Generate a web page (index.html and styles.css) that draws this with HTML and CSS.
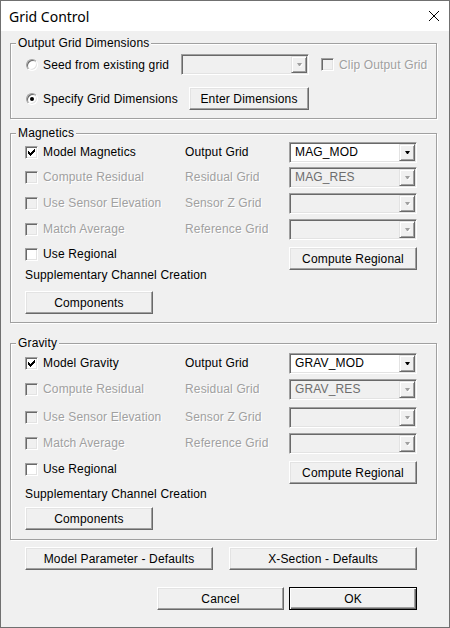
FILE: index.html
```html
<!DOCTYPE html>
<html lang="en">
<head>
  <meta charset="UTF-8">
  <meta name="viewport" content="width=device-width, initial-scale=1.0">
  <title>Grid Control</title>
  <link rel="stylesheet" href="styles.css">
</head>
<body>
  <div class="dialog">
    <div class="titlebar">
      <span class="title">Grid Control</span>
      <svg class="close" width="10" height="10" viewBox="0 0 10 10"><path d="M0 0L10 10M10 0L0 10" stroke="#000" stroke-width="1"/></svg>
    </div>

    <div class="client">
      <!-- Output grid dimensions -->
      <fieldset class="group output-group">
        <legend>Output Grid Dimensions</legend>
        <div class="opt-row">
          <span class="radio-item seed"><span class="radio"></span>Seed from existing grid</span>
          <span class="combo disabled seed-combo"><span class="combo-text"></span><span class="combo-btn"></span></span>
          <span class="check-item disabled clip"><span class="check"></span>Clip Output Grid</span>
        </div>
        <div class="opt-row second">
          <span class="radio-item specify"><span class="radio on"></span>Specify Grid Dimensions</span>
          <span class="btn enter-btn">Enter Dimensions</span>
        </div>
      </fieldset>

      <!-- Magnetics -->
      <fieldset class="group model-group mag">
        <legend>Magnetics</legend>
        <div class="model-grid">
          <span class="check-item"><span class="check on"><svg width="9" height="9" viewBox="0 0 9 9"><path d="M1 3h1v3H1zM2 4h1v3H2zM3 5h1v3H3zM4 4h1v3H4zM5 3h1v3H5zM6 2h1v3H6zM7 1h1v3H7z" fill="#000" shape-rendering="crispEdges"/></svg></span>Model Magnetics</span>
          <span class="field-label">Output Grid</span>
          <span class="combo"><span class="combo-text">MAG_MOD</span><span class="combo-btn"></span></span>

          <span class="check-item disabled"><span class="check"></span>Compute Residual</span>
          <span class="field-label disabled">Residual Grid</span>
          <span class="combo disabled"><span class="combo-text">MAG_RES</span><span class="combo-btn"></span></span>

          <span class="check-item disabled"><span class="check"></span>Use Sensor Elevation</span>
          <span class="field-label disabled">Sensor Z Grid</span>
          <span class="combo disabled"><span class="combo-text"></span><span class="combo-btn"></span></span>

          <span class="check-item disabled"><span class="check"></span>Match Average</span>
          <span class="field-label disabled">Reference Grid</span>
          <span class="combo disabled"><span class="combo-text"></span><span class="combo-btn"></span></span>

          <div class="tail">
            <span class="check-item regional"><span class="check"></span>Use Regional</span>
            <span class="supp">Supplementary Channel Creation</span>
            <span class="btn components">Components</span>
          </div>
          <span class="btn regional-btn">Compute Regional</span>
        </div>
      </fieldset>

      <!-- Gravity -->
      <fieldset class="group model-group grav">
        <legend>Gravity</legend>
        <div class="model-grid">
          <span class="check-item"><span class="check on"><svg width="9" height="9" viewBox="0 0 9 9"><path d="M1 3h1v3H1zM2 4h1v3H2zM3 5h1v3H3zM4 4h1v3H4zM5 3h1v3H5zM6 2h1v3H6zM7 1h1v3H7z" fill="#000" shape-rendering="crispEdges"/></svg></span>Model Gravity</span>
          <span class="field-label">Output Grid</span>
          <span class="combo"><span class="combo-text">GRAV_MOD</span><span class="combo-btn"></span></span>

          <span class="check-item disabled"><span class="check"></span>Compute Residual</span>
          <span class="field-label disabled">Residual Grid</span>
          <span class="combo disabled"><span class="combo-text">GRAV_RES</span><span class="combo-btn"></span></span>

          <span class="check-item disabled"><span class="check"></span>Use Sensor Elevation</span>
          <span class="field-label disabled">Sensor Z Grid</span>
          <span class="combo disabled"><span class="combo-text"></span><span class="combo-btn"></span></span>

          <span class="check-item disabled"><span class="check"></span>Match Average</span>
          <span class="field-label disabled">Reference Grid</span>
          <span class="combo disabled"><span class="combo-text"></span><span class="combo-btn"></span></span>

          <div class="tail">
            <span class="check-item regional"><span class="check"></span>Use Regional</span>
            <span class="supp">Supplementary Channel Creation</span>
            <span class="btn components">Components</span>
          </div>
          <span class="btn regional-btn">Compute Regional</span>
        </div>
      </fieldset>

      <div class="defaults-row">
        <span class="btn wide-btn">Model Parameter - Defaults</span>
        <span class="btn wide-btn">X-Section - Defaults</span>
      </div>

      <div class="action-row">
        <span class="btn cancel-btn">Cancel</span>
        <span class="btn ok-btn default">OK</span>
      </div>
    </div>
  </div>
</body>
</html>
```

FILE: styles.css
```css
* {
  box-sizing: border-box;
}
html, body {
  margin: 0;
}
body {
  width: 450px;
  height: 628px;
  overflow: hidden;
  font-family: "Liberation Sans", Arial, sans-serif;
  font-size: 12px;
  color: #000;
  background: #f0f0f0;
}

.dialog {
  width: 450px;
  height: 628px;
  border: 1px solid #707070;
  background: #f0f0f0;
}

/* title bar */
.titlebar {
  display: flex;
  align-items: center;
  justify-content: space-between;
  height: 30px;
  padding: 0 10px 0 8px;
  background: #fff;
}
.title {
  font-family: "Noto Sans", sans-serif;
  font-size: 14px;
}
.close {
  display: block;
}

.client {
  padding: 0 12px 0 9px;
  letter-spacing: 0.15px;
}

/* group boxes */
.group {
  margin: 0;
  padding: 0 0 8px 14px;
  min-width: 0;
  border: 1px solid #a0a0a0;
  box-shadow: inset 1px 1px #fff, 1px 1px #fff;
}
.group legend {
  margin-left: -9px;
  padding: 0 2px;
  line-height: 15px;
  background: #f0f0f0;
}
.output-group {
  margin-top: 5px;
  padding-top: 3px;
}
.mag {
  margin-top: 7px;
  padding-top: 1px;
}
.grav {
  margin-top: 13px;
  padding-top: 2px;
  padding-bottom: 9px;
}

/* output grid rows */
.opt-row {
  display: flex;
  align-items: center;
  height: 21px;
  white-space: nowrap;
}
.opt-row.second {
  height: 23px;
  margin-top: 12px;
}
.radio-item,
.check-item {
  display: flex;
  align-items: center;
  white-space: nowrap;
}
.seed {
  width: 156px;
}
.specify {
  width: 164px;
}
.clip {
  margin-left: 12px;
}
.enter-btn {
  width: 120px;
}

/* radio buttons */
.radio {
  position: relative;
  width: 12px;
  height: 12px;
  margin: 0 5px 0 1px;
  border: 1px solid;
  border-color: #a0a0a0 #fff #fff #a0a0a0;
  border-radius: 50%;
  background: #fff;
  box-shadow: inset 1px 1px #696969, inset -1px -1px #e3e3e3;
}
.radio.on::after {
  content: "";
  position: absolute;
  left: 3px;
  top: 3px;
  width: 4px;
  height: 4px;
  border-radius: 50%;
  background: #000;
}

/* check boxes */
.check {
  display: flex;
  align-items: center;
  justify-content: center;
  width: 13px;
  height: 13px;
  margin-right: 5px;
  padding: 1px;
  border: 1px solid;
  border-color: #a0a0a0 #fff #fff #a0a0a0;
  background: #fff;
  box-shadow: inset 1px 1px #696969, inset -1px -1px #e3e3e3;
  flex: none;
}
.check svg {
  display: block;
}
.disabled .check {
  background: #f0f0f0;
}

.disabled,
.disabled.check-item {
  color: #a0a0a0;
  text-shadow: 1px 1px 0 #fff;
}

/* combo boxes */
.combo {
  display: flex;
  width: 128px;
  height: 21px;
  padding: 1px;
  border: 1px solid;
  border-color: #a0a0a0 #fff #fff #a0a0a0;
  background: #fff;
  box-shadow: inset 1px 1px #696969, inset -1px -1px #e3e3e3;
}
.combo-text {
  flex: 1;
  padding-left: 4px;
  line-height: 17px;
  white-space: nowrap;
}
.combo-btn {
  position: relative;
  width: 16px;
  height: 17px;
  border: 1px solid;
  border-color: #e3e3e3 #696969 #696969 #e3e3e3;
  background: #f0f0f0;
  box-shadow: inset 1px 1px #fff, inset -1px -1px #a0a0a0;
}
.combo-btn::after {
  content: "";
  position: absolute;
  left: 5px;
  top: 6px;
  width: 1px;
  height: 0;
  border-left: 2px solid transparent;
  border-right: 2px solid transparent;
  border-top: 3px solid #000;
}
.combo.disabled {
  background: #f0f0f0;
  color: #6d6d6d;
  text-shadow: none;
}
.combo.disabled .combo-btn::after {
  border-top-color: #a0a0a0;
  filter: drop-shadow(1px 1px 0 #fff);
}

/* magnetics / gravity layout */
.model-grid {
  display: grid;
  grid-template-columns: 160px 104px 128px;
  grid-template-rows: 25px 26px 26px 28px auto;
  align-items: start;
}
.grav .model-grid {
  grid-template-rows: 26px 28px 26px 28px auto;
}
.model-grid > .check-item,
.field-label {
  height: 20px;
  line-height: 20px;
  white-space: nowrap;
}
.tail {
  grid-column: 1 / 3;
  display: flex;
  flex-direction: column;
  align-items: flex-start;
}
.tail .regional {
  height: 14px;
  line-height: 14px;
}
.supp {
  margin-top: 7px;
  line-height: 14px;
  white-space: nowrap;
}
.components {
  width: 128px;
  margin-top: 9px;
}
.regional-btn {
  width: 128px;
  height: 24px;
}
.grav .regional {
  margin-top: 1px;
}
.grav .supp {
  margin-top: 11px;
}
.grav .components {
  margin-top: 6px;
}
.grav .regional-btn {
  height: 23px;
}

/* push buttons */
.btn {
  display: flex;
  align-items: center;
  justify-content: center;
  height: 23px;
  border: 1px solid;
  border-color: #fff #696969 #696969 #fff;
  background: #f0f0f0;
  box-shadow: inset -1px -1px #a0a0a0, inset 1px 1px #e3e3e3;
  white-space: nowrap;
}
.btn.default {
  border-color: #000;
  box-shadow: inset 1px 1px #fff, inset -1px -1px #696969, inset -2px -2px #a0a0a0;
}

.defaults-row {
  display: flex;
  gap: 16px;
  margin-top: 7px;
  padding-left: 15px;
}
.wide-btn {
  width: 188px;
}
.action-row {
  display: flex;
  justify-content: flex-end;
  gap: 5px;
  margin-top: 17px;
  padding-right: 20px;
}
.cancel-btn {
  width: 127px;
}
.ok-btn {
  width: 128px;
}
```
